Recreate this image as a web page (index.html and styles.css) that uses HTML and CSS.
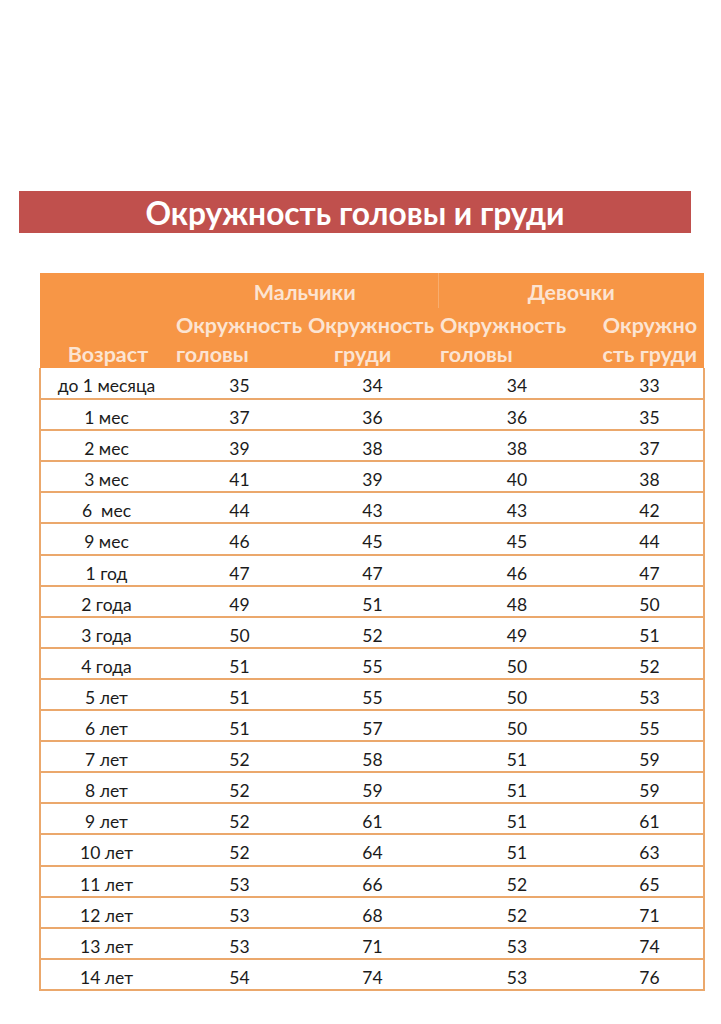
FILE: index.html
```html
<!DOCTYPE html>
<html lang="ru">
<head>
<meta charset="utf-8">
<title>Окружность головы и груди</title>
<link rel="stylesheet" href="styles.css">
</head>
<body>
<div class="page">
  <h1 class="title">Окружность головы и груди</h1>
  <table class="sizes">
    <colgroup>
      <col class="c1"><col class="c2"><col class="c3"><col class="c4"><col class="c5">
    </colgroup>
    <thead>
      <tr class="hr1">
        <th></th>
        <th colspan="2" class="grp">Мальчики</th>
        <th colspan="2" class="grp sep">Девочки</th>
      </tr>
      <tr class="hr2">
        <th class="age">Возраст</th>
        <th class="left"><span class="ln">Окружность</span><span class="ln">головы</span></th>
        <th class="mid"><span class="ln">Окружность</span><span class="ln ind">груди</span></th>
        <th class="left2"><span class="ln">Окружность</span><span class="ln">головы</span></th>
        <th class="right"><span class="ln">Окружно</span><span class="ln">сть груди</span></th>
      </tr>
    </thead>
    <tbody>
      <tr><td>до 1 месяца</td><td>35</td><td>34</td><td>34</td><td>33</td></tr>
      <tr><td>1 мес</td><td>37</td><td>36</td><td>36</td><td>35</td></tr>
      <tr><td>2 мес</td><td>39</td><td>38</td><td>38</td><td>37</td></tr>
      <tr><td>3 мес</td><td>41</td><td>39</td><td>40</td><td>38</td></tr>
      <tr><td>6&nbsp; мес</td><td>44</td><td>43</td><td>43</td><td>42</td></tr>
      <tr><td>9 мес</td><td>46</td><td>45</td><td>45</td><td>44</td></tr>
      <tr><td>1 год</td><td>47</td><td>47</td><td>46</td><td>47</td></tr>
      <tr><td>2 года</td><td>49</td><td>51</td><td>48</td><td>50</td></tr>
      <tr><td>3 года</td><td>50</td><td>52</td><td>49</td><td>51</td></tr>
      <tr><td>4 года</td><td>51</td><td>55</td><td>50</td><td>52</td></tr>
      <tr><td>5 лет</td><td>51</td><td>55</td><td>50</td><td>53</td></tr>
      <tr><td>6 лет</td><td>51</td><td>57</td><td>50</td><td>55</td></tr>
      <tr><td>7 лет</td><td>52</td><td>58</td><td>51</td><td>59</td></tr>
      <tr><td>8 лет</td><td>52</td><td>59</td><td>51</td><td>59</td></tr>
      <tr><td>9 лет</td><td>52</td><td>61</td><td>51</td><td>61</td></tr>
      <tr><td>10 лет</td><td>52</td><td>64</td><td>51</td><td>63</td></tr>
      <tr><td>11 лет</td><td>53</td><td>66</td><td>52</td><td>65</td></tr>
      <tr><td>12 лет</td><td>53</td><td>68</td><td>52</td><td>71</td></tr>
      <tr><td>13 лет</td><td>53</td><td>71</td><td>53</td><td>74</td></tr>
      <tr><td>14 лет</td><td>54</td><td>74</td><td>53</td><td>76</td></tr>
    </tbody>
  </table>
</div>
</body>
</html>
```
FILE: styles.css
```css
html, body {
  margin: 0;
  padding: 0;
  background: #ffffff;
}
body {
  font-family: Lato, "Open Sans", "Liberation Sans", sans-serif;
  color: #1b1b1b;
}
.page {
  width: 721px;
  height: 1024px;
  padding-top: 191px;
  box-sizing: border-box;
}
.title {
  margin: 0 30px 0 19px;
  height: 42px;
  background: #c0504d;
  color: #ffffff;
  font-size: 31.7px;
  font-weight: 700;
  line-height: 44px;
  text-align: center;
  box-sizing: border-box;
}
.sizes {
  margin: 40px 0 0 39px;
  width: 664px;
  border-collapse: collapse;
  table-layout: fixed;
}
.c1 { width: 132px; }
.c2 { width: 135px; }
.c3 { width: 131px; }
.c4 { width: 158px; }
.c5 { width: 108px; }
.sizes thead th {
  background: #f79646;
  color: #fce4d2;
  font-weight: 700;
  font-size: 21.5px;
  padding: 0;
  white-space: nowrap;
  overflow: visible;
  box-sizing: border-box;
}
.sizes .hr1 th {
  height: 35px;
  vertical-align: top;
  padding-top: 4px;
  line-height: 30px;
}
.sizes .grp { text-align: center; }
.sizes .grp.sep { border-left: 1px solid rgba(255, 255, 255, 0.22); }
.sizes .hr2 th {
  height: 60px;
  vertical-align: top;
  line-height: 28.5px;
  padding-top: 3px;
}
.ln { display: block; }
.sizes .hr2 .age {
  vertical-align: bottom;
  text-align: center;
  padding: 0 0 0 4px;
}
.sizes .hr2 .left { text-align: left; padding-left: 4px; }
.sizes .hr2 .mid { text-align: left; padding-left: 1px; }
.sizes .hr2 .mid .ind { padding-left: 26px; }
.sizes .hr2 .left2 { text-align: left; padding-left: 2px; }
.sizes .hr2 .right { text-align: right; padding-right: 7px; }
.sizes tbody td {
  height: 31.1px;
  box-sizing: border-box;
  padding: 6px 0 0 0;
  font-size: 17.5px;
  text-align: center;
  border-bottom: 2px solid #eba86c;
  line-height: 23px;
  vertical-align: top;
}
.sizes tbody td:first-child { border-left: 2px solid #eba86c; }
.sizes tbody td:last-child { border-right: 2px solid #eba86c; }
```
